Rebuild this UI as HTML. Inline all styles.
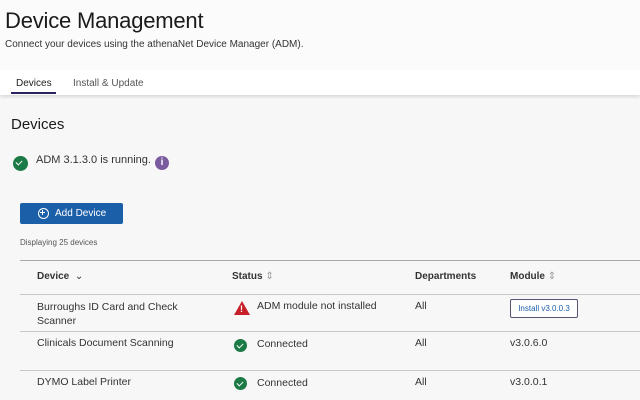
<!DOCTYPE html>
<html><head><style>
body{margin:0;width:640px;height:400px;overflow:hidden;background:#f7f7f7;font-family:"Liberation Sans",sans-serif;color:#222;position:relative}
.a{position:absolute;white-space:nowrap}
.hdr{position:absolute;left:0;top:0;width:640px;height:95px;background:#fbfbfb;box-shadow:0 2px 3px rgba(0,0,0,.12)}
.tabbar{position:absolute;left:0;top:70px;width:640px;height:25px;background:#fff}
.line{position:absolute;left:20px;width:620px;height:1px;background:#c8c8c8}
.chk{position:absolute;width:13px;height:13px;border-radius:50%;background:#1b7a45}
.chk:after{content:"";position:absolute;left:4px;top:3px;width:3px;height:5px;border:solid #fff;border-width:0 1.5px 1.5px 0;transform:rotate(45deg)}
.t{font-size:11px;color:#333}
</style></head><body>
<div class="hdr"></div>
<div class="tabbar"></div>
<div class="a" style="left:5px;top:8px;font-size:22px;color:#1a1a1a;letter-spacing:-0.2px">Device Management</div>
<div class="a" style="left:5px;top:39px;font-size:10px;color:#333">Connect your devices using the athenaNet Device Manager (ADM).</div>
<div class="a" style="left:16px;top:78px;font-size:10px;color:#222">Devices</div>
<div class="a" style="left:11px;top:92px;width:45px;height:2px;background:#2a2560"></div>
<div class="a" style="left:73px;top:78px;font-size:10px;color:#555">Install &amp; Update</div>
<div class="a" style="left:11px;top:116px;font-size:15px;color:#1a1a1a">Devices</div>
<div class="chk" style="left:13px;top:156px;width:15px;height:15px"></div>
<div class="a" style="left:36px;top:154px;font-size:11px;color:#333">ADM 3.1.3.0 is running.</div>
<div class="a" style="left:155px;top:156px;width:14px;height:14px;border-radius:50%;background:#7a5c9e;color:#fff;font-size:10px;font-weight:bold;text-align:center;line-height:14px">i</div>
<div class="a" style="left:20px;top:203px;width:103px;height:21px;background:#1c5fa9;border-radius:2px"></div>
<div class="a" style="left:38px;top:208px;width:9px;height:9px;border:1px solid #fff;border-radius:50%"></div>
<div class="a" style="left:42px;top:210px;width:1px;height:5px;background:#fff"></div>
<div class="a" style="left:40px;top:212px;width:5px;height:1px;background:#fff"></div>
<div class="a" style="left:55px;top:208px;color:#fff;font-size:10px">Add Device</div>
<div class="a" style="left:20px;top:238px;font-size:8px;color:#555">Displaying 25 devices</div>
<div class="line" style="top:260px;background:#aaa"></div>
<div class="a t" style="left:37px;top:271px;font-weight:bold;font-size:10px">Device &nbsp;<span style="font-weight:normal">⌄</span></div>
<div class="a t" style="left:232px;top:271px;font-weight:bold;font-size:10px">Status <span style="color:#999;font-weight:normal">⇕</span></div>
<div class="a t" style="left:415px;top:271px;font-weight:bold;font-size:10px">Departments</div>
<div class="a t" style="left:510px;top:271px;font-weight:bold;font-size:10px">Module <span style="color:#999;font-weight:normal">⇕</span></div>
<div class="line" style="top:294px"></div>
<div class="a t" style="left:37px;top:300px;line-height:14px;font-size:10.5px">Burroughs ID Card and Check<br>Scanner</div>
<div class="a" style="left:234px;top:301px;width:0;height:0;border-left:8px solid transparent;border-right:8px solid transparent;border-bottom:14px solid #c8202a"></div>
<div class="a" style="left:240px;top:304px;color:#fff;font-size:9px;font-weight:bold">!</div>
<div class="a t" style="left:257px;top:300px;font-size:10.5px">ADM module not installed</div>
<div class="a t" style="left:415px;top:300px;font-size:10.5px">All</div>
<div class="a" style="left:510px;top:299px;width:66px;height:17px;border:1px solid #557;border-radius:2px;background:#fff;color:#1c5fa9;font-size:8px;line-height:17px;text-align:center">Install v3.0.0.3</div>
<div class="line" style="top:331px"></div>
<div class="a t" style="left:37px;top:337px;font-size:10.5px">Clinicals Document Scanning</div>
<div class="chk" style="left:234px;top:339px"></div>
<div class="a t" style="left:257px;top:338px;font-size:10.5px">Connected</div>
<div class="a t" style="left:415px;top:337px;font-size:10.5px">All</div>
<div class="a t" style="left:510px;top:337px;font-size:10.5px">v3.0.6.0</div>
<div class="line" style="top:370px"></div>
<div class="a t" style="left:37px;top:376px;font-size:10.5px">DYMO Label Printer</div>
<div class="chk" style="left:234px;top:377px"></div>
<div class="a t" style="left:257px;top:377px;font-size:10.5px">Connected</div>
<div class="a t" style="left:415px;top:376px;font-size:10.5px">All</div>
<div class="a t" style="left:510px;top:376px;font-size:10.5px">v3.0.0.1</div>
</body></html>
